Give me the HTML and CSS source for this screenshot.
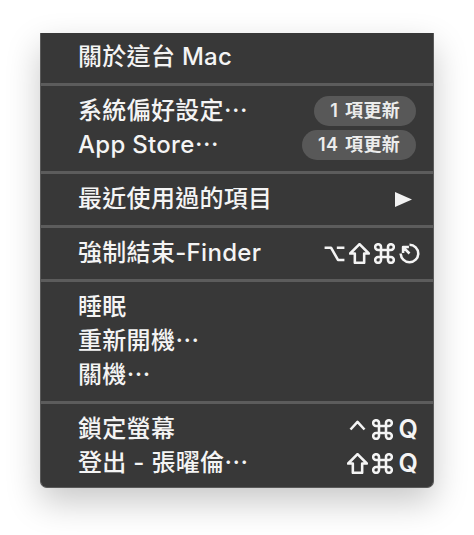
FILE: index.html
```html
<!DOCTYPE html>
<html lang="zh-Hant">
<head>
    <meta charset="UTF-8">
    <meta name="viewport" content="width=device-width, initial-scale=1.0">
    <title>Apple 選單</title>
    <link rel="stylesheet" href="styles.css">
</head>
<body>

    <!-- Apple menu -->
    <div class="menu">
        <div class="group first">
            <div class="item"><span class="label">關於這台 Mac</span></div>
        </div>

        <div class="group">
            <div class="item">
                <span class="label">系統偏好設定⋯</span>
                <span class="badge">1 項更新</span>
            </div>
            <div class="item">
                <span class="label">App Store⋯</span>
                <span class="badge">14 項更新</span>
            </div>
        </div>

        <div class="group">
            <div class="item">
                <span class="label">最近使用過的項目</span>
                <svg class="arrow" width="17" height="15" viewBox="0 0 17 15"><polygon points="0,0 17,7.5 0,15" fill="#f2f2f2"/></svg>
            </div>
        </div>

        <div class="group">
            <div class="item">
                <span class="label">強制結束-Finder</span>
                <span class="keys">
                    <!-- option -->
                    <svg class="key" viewBox="1 1 18 18"><path d="M1.5 5 H7 L13 15.5 H18.5 M12 5 H18.5"/></svg>
                    <!-- shift -->
                    <svg class="key" viewBox="1 1 18 18"><path d="M10 2 L18 10 H14 V18 H6 V10 H2 Z"/></svg>
                    <!-- command -->
                    <svg class="key" viewBox="1 1 18 18"><path d="M7 4.5 A2.5 2.5 0 1 0 4.5 7 H15.5 A2.5 2.5 0 1 0 13 4.5 V15.5 A2.5 2.5 0 1 0 15.5 13 H4.5 A2.5 2.5 0 1 0 7 15.5 Z"/></svg>
                    <!-- escape -->
                    <svg class="key" viewBox="1 1 18 18"><path d="M10 2.5 A7.5 7.5 0 1 1 2.5 10 M4.5 4.5 L10 10 M4.5 9.5 V4.5 H9.5"/></svg>
                </span>
            </div>
        </div>

        <div class="group">
            <div class="item"><span class="label">睡眠</span></div>
            <div class="item"><span class="label">重新開機⋯</span></div>
            <div class="item"><span class="label">關機⋯</span></div>
        </div>

        <div class="group last">
            <div class="item">
                <span class="label">鎖定螢幕</span>
                <span class="keys">
                    <svg class="key" viewBox="1 1 18 18"><path d="M4 10 L10 3.5 L16 10"/></svg>
                    <svg class="key" viewBox="1 1 18 18"><path d="M7 4.5 A2.5 2.5 0 1 0 4.5 7 H15.5 A2.5 2.5 0 1 0 13 4.5 V15.5 A2.5 2.5 0 1 0 15.5 13 H4.5 A2.5 2.5 0 1 0 7 15.5 Z"/></svg>
                    <span class="key-letter">Q</span>
                </span>
            </div>
            <div class="item">
                <span class="label">登出 - 張曜倫⋯</span>
                <span class="keys">
                    <svg class="key" viewBox="1 1 18 18"><path d="M10 2 L18 10 H14 V18 H6 V10 H2 Z"/></svg>
                    <svg class="key" viewBox="1 1 18 18"><path d="M7 4.5 A2.5 2.5 0 1 0 4.5 7 H15.5 A2.5 2.5 0 1 0 13 4.5 V15.5 A2.5 2.5 0 1 0 15.5 13 H4.5 A2.5 2.5 0 1 0 7 15.5 Z"/></svg>
                    <span class="key-letter">Q</span>
                </span>
            </div>
        </div>
    </div>

</body>
</html>
```

FILE: styles.css
```css
/* Page */
body {
    margin: 0;
    padding: 33px 0 48px 40px;
    background-color: #fff;
    font-family: 'Inter', 'Noto Sans CJK TC', sans-serif;
}

/* Menu panel */
.menu {
    width: 392px;
    background-color: #383838;
    border: 1px solid #5a5a5a;
    border-top: none;
    border-radius: 0 0 7px 7px;
    box-shadow: 0 14px 34px rgba(0, 0, 0, 0.22);
    color: #f4f4f4;
}

.group {
    padding: 8px 0 9px;
}

.group + .group {
    border-top: 3px solid #5c5c5c;
}

.group.first {
    padding-top: 7px;
}

.group.last {
    padding-bottom: 7px;
}

.item {
    display: flex;
    align-items: center;
    justify-content: space-between;
    height: 34px;
    padding: 0 13px 0 37px;
    font-size: 24px;
    font-weight: 500;
    line-height: 34px;
    letter-spacing: 0.3px;
    white-space: nowrap;
}

/* Update badges */
.badge {
    height: 30px;
    padding: 0 16px;
    margin-right: 4px;
    border-radius: 15px;
    background-color: #585858;
    color: #ececec;
    font-size: 18px;
    font-weight: 600;
    line-height: 30px;
    letter-spacing: 0.3px;
    word-spacing: 2px;
}

.arrow {
    margin-right: 8px;
}

/* Keyboard shortcuts */
.keys {
    display: flex;
    align-items: center;
    gap: 4px;
}

.key {
    width: 21px;
    height: 21px;
    fill: none;
    stroke: #f4f4f4;
    stroke-width: 2.2;
    stroke-linejoin: round;
}

.key-letter {
    font-size: 25px;
    font-weight: 600;
    margin-left: 1px;
    margin-right: 2px;
}
```
